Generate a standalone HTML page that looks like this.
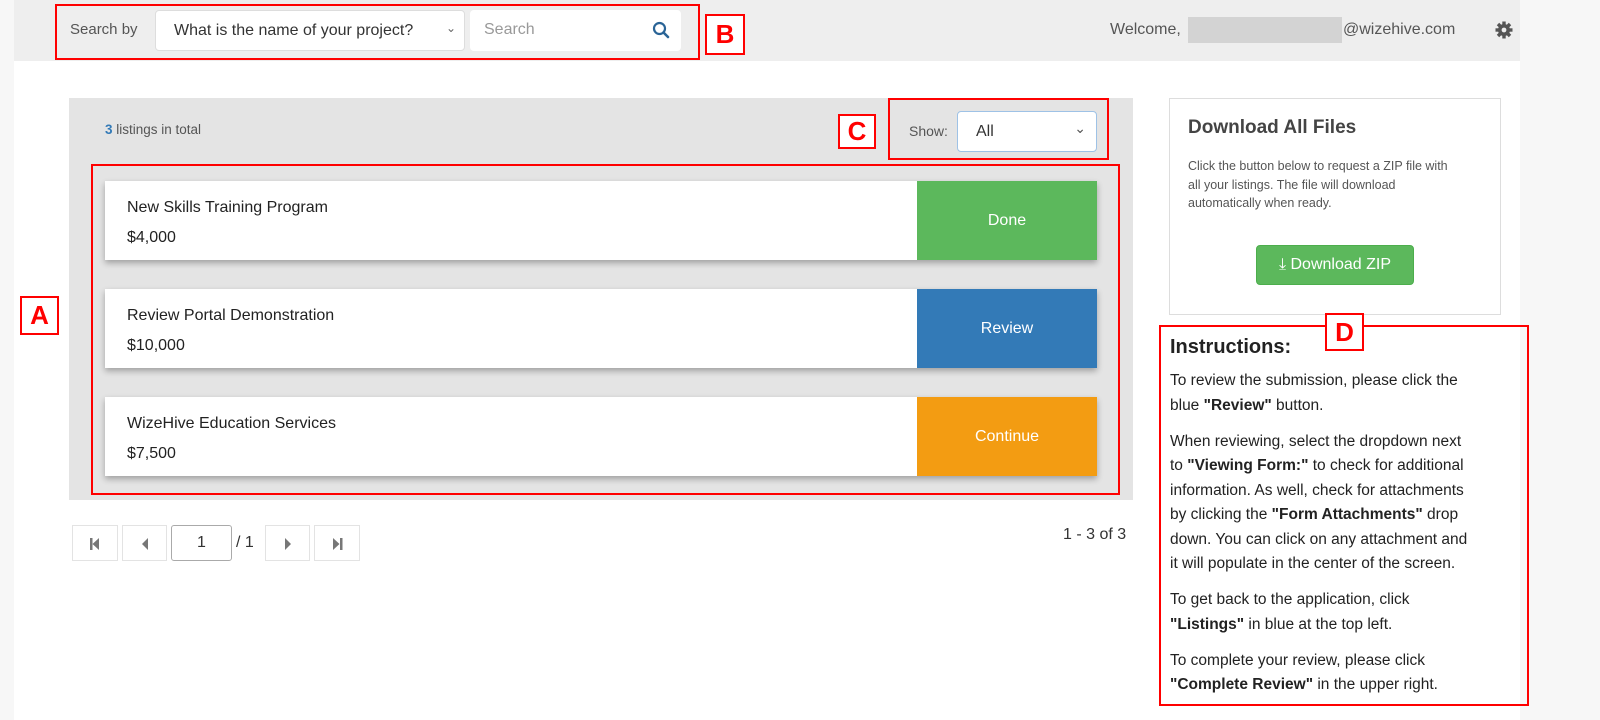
<!DOCTYPE html>
<html><head><style>
*{box-sizing:border-box;margin:0;padding:0}
body{width:1600px;height:720px;background:#fff;font-family:"Liberation Sans",sans-serif;color:#333;position:relative;overflow:hidden}
.a{position:absolute}
.red{position:absolute;border:2px solid #f00}
.lbl{position:absolute;border:2px solid #f00;color:#f00;font-weight:bold;font-size:26px;text-align:center;line-height:34px;background:#fff}
.card{position:absolute;left:105px;width:992px;height:79px;background:#fff;box-shadow:0 3px 6px rgba(0,0,0,.3)}
.card .t{position:absolute;left:22px;top:18px;font-size:16px;color:#222}
.card .p{position:absolute;left:22px;top:48px;font-size:16px;color:#222}
.card .b{position:absolute;right:0;top:0;width:180px;height:79px;color:#fff;font-size:16px;text-align:center;line-height:79px}
.pg{position:absolute;top:525px;height:36px;border:1px solid #e3e3e3;background:#fff}
.ins p{font-size:15.5px;line-height:24.5px;margin-bottom:11.5px;color:#222;white-space:nowrap}
</style></head><body>
<div class="a" style="left:0;top:0;width:14px;height:720px;background:#f7f7f7"></div>
<div class="a" style="left:1520px;top:0;width:80px;height:720px;background:#f7f7f7"></div>
<div class="a" style="left:14px;top:0;width:1506px;height:61px;background:#eeeeee"></div>
<div class="a" style="left:70px;top:21px;font-size:15px;color:#555">Search by</div>
<div class="a" style="left:155px;top:10px;width:310px;height:41px;background:#fff;border:1px solid #ddd;border-radius:4px;font-size:16px;color:#333;padding:11px 0 0 18px">What is the name of your project?<span style="position:absolute;right:8px;top:10px;font-size:12px;color:#666">&#8964;</span></div>
<div class="a" style="left:470px;top:10px;width:211px;height:41px;background:#fff;border-radius:4px;font-size:16px;color:#999;padding:11px 0 0 14px">Search
<svg class="a" style="left:182px;top:11px" width="18" height="18" viewBox="0 0 18 18"><circle cx="7.5" cy="7.5" r="5.5" fill="none" stroke="#2a6496" stroke-width="2.2"/><path d="M11.5 11.5L16 16" stroke="#2a6496" stroke-width="2.6" stroke-linecap="round"/></svg></div>
<div class="red" style="left:55px;top:4px;width:645px;height:56px"></div>
<div class="lbl" style="left:705px;top:14px;width:40px;height:41px;line-height:37px">B</div>
<div class="a" style="left:1110px;top:21px;font-size:16px;color:#555">Welcome,</div>
<div class="a" style="left:1188px;top:17px;width:154px;height:26px;background:#d3d3d3"></div>
<div class="a" style="left:1343px;top:21px;font-size:16px;color:#555">@wizehive.com</div>
<svg class="a" style="left:1495px;top:21px" width="18" height="18" viewBox="0 0 18 18"><g fill="#555"><circle cx="9" cy="9" r="6"/><rect x="7.3" y="0.5" width="3.4" height="17"/><rect x="0.5" y="7.3" width="17" height="3.4"/><rect x="7.3" y="0.5" width="3.4" height="17" transform="rotate(45 9 9)"/><rect x="7.3" y="0.5" width="3.4" height="17" transform="rotate(-45 9 9)"/></g><circle cx="9" cy="9" r="2.4" fill="#eee"/></svg>

<div class="a" style="left:69px;top:98px;width:1064px;height:402px;background:#e4e4e4"></div>
<div class="a" style="left:105px;top:122px;font-size:13.5px;color:#555"><b style="color:#337ab7">3</b> listings in total</div>
<div class="a" style="left:909px;top:123px;font-size:14px;color:#555">Show:</div>
<div class="a" style="left:957px;top:111px;width:140px;height:41px;background:#fff;border:1px solid #9ec2e6;border-radius:4px;font-size:16px;padding:11px 0 0 18px">All<span style="position:absolute;right:10px;top:8px;font-size:14px;color:#555">&#8964;</span></div>
<div class="red" style="left:888px;top:98px;width:221px;height:62px"></div>
<div class="lbl" style="left:838px;top:114px;width:38px;height:35px;line-height:31px">C</div>

<div class="card" style="top:181px"><div class="t">New Skills Training Program</div><div class="p">$4,000</div><div class="b" style="background:#5cb85c">Done</div></div>
<div class="card" style="top:289px"><div class="t">Review Portal Demonstration</div><div class="p">$10,000</div><div class="b" style="background:#337ab7">Review</div></div>
<div class="card" style="top:397px"><div class="t">WizeHive Education Services</div><div class="p">$7,500</div><div class="b" style="background:#f39c12">Continue</div></div>
<div class="red" style="left:91px;top:164px;width:1029px;height:331px"></div>
<div class="lbl" style="left:20px;top:296px;width:39px;height:39px;line-height:35px">A</div>

<div class="pg" style="left:72px;width:46px"><svg class="a" style="left:16px;top:11px" width="12" height="14"><rect x="1" y="1" width="2.5" height="12" fill="#777"/><path d="M10 1L3.5 7L10 13Z" fill="#777"/></svg></div>
<div class="pg" style="left:122px;width:45px"><svg class="a" style="left:17px;top:11px" width="10" height="14"><path d="M8 1L2 7L8 13Z" fill="#777"/></svg></div>
<div class="pg" style="left:171px;width:61px;border:1px solid #aaa;border-radius:3px;text-align:center;font-size:16px;line-height:34px;color:#333">1</div>
<div class="a" style="left:236px;top:534px;font-size:16px;color:#333">/ 1</div>
<div class="pg" style="left:265px;width:45px"><svg class="a" style="left:17px;top:11px" width="10" height="14"><path d="M2 1L8 7L2 13Z" fill="#777"/></svg></div>
<div class="pg" style="left:314px;width:46px"><svg class="a" style="left:17px;top:11px" width="12" height="14"><path d="M1 1L7.5 7L1 13Z" fill="#777"/><rect x="8" y="1" width="2.5" height="12" fill="#777"/></svg></div>
<div class="a" style="left:1063px;top:526px;font-size:16px;color:#333">1 - 3 of 3</div>

<div class="a" style="left:1169px;top:98px;width:332px;height:217px;border:1px solid #ddd;background:#fff"></div>
<div class="a" style="left:1188px;top:117px;font-size:19px;font-weight:bold;color:#444">Download All Files</div>
<div class="a" style="left:1188px;top:157px;font-size:12.5px;line-height:18.5px;color:#555;white-space:nowrap">Click the button below to request a ZIP file with<br>all your listings. The file will download<br>automatically when ready.</div>
<div class="a" style="left:1256px;top:245px;width:158px;height:40px;background:#5cb85c;border:1px solid #4cae4c;border-radius:4px;color:#fff;font-size:16px;line-height:38px;text-align:center">&#10515; Download ZIP</div>

<div class="a ins" style="left:1170px;top:336px;width:350px">
<div style="font-size:20px;font-weight:bold;color:#222;margin-bottom:10px">Instructions:</div>
<p>To review the submission, please click the<br>blue <b>"Review"</b> button.</p>
<p>When reviewing, select the dropdown next<br>to <b>"Viewing Form:"</b> to check for additional<br>information. As well, check for attachments<br>by clicking the <b>"Form Attachments"</b> drop<br>down. You can click on any attachment and<br>it will populate in the center of the screen.</p>
<p>To get back to the application, click<br><b>"Listings"</b> in blue at the top left.</p>
<p>To complete your review, please click<br><b>"Complete Review"</b> in the upper right.</p>
</div>
<div class="red" style="left:1159px;top:325px;width:370px;height:381px"></div>
<div class="lbl" style="left:1325px;top:313px;width:39px;height:38px;line-height:34px">D</div>
</body></html>
